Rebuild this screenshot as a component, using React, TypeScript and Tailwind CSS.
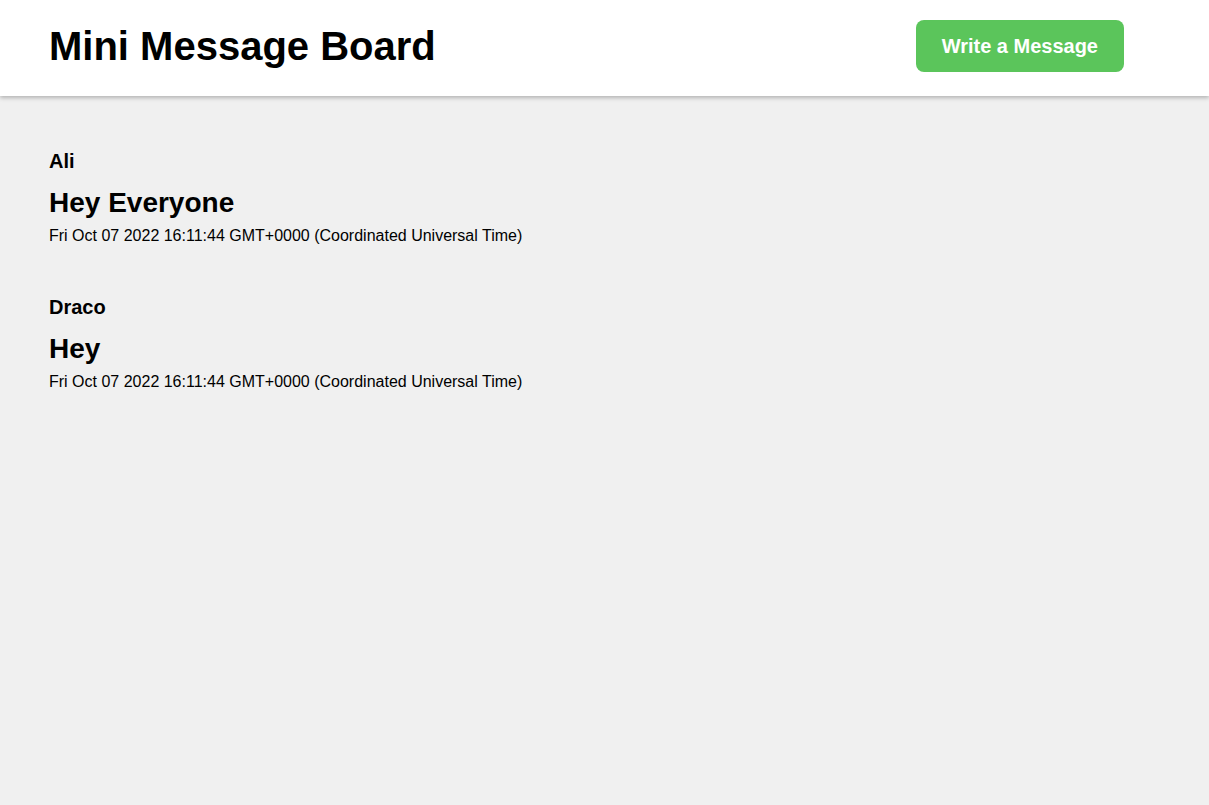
import React from "react";

const messages = [
  { user: "Ali", text: "Hey Everyone", added: "Fri Oct 07 2022 16:11:44 GMT+0000 (Coordinated Universal Time)" },
  { user: "Draco", text: "Hey", added: "Fri Oct 07 2022 16:11:44 GMT+0000 (Coordinated Universal Time)" },
];

export default function App() {
  return (
    <div className="min-h-[805px] bg-[#f0f0f0] text-black [font-family:'Liberation_Sans',Arial,sans-serif]">
      <header className="relative z-10 flex h-[96px] items-center justify-between bg-white pb-[4px] pl-[49px] pr-[85px] shadow-[0_2px_4px_rgba(0,0,0,0.25)]">
        <h1 className="text-[40px] font-bold leading-[46px]">Mini Message Board</h1>
        <button className="flex h-[52px] items-center rounded-lg bg-[#5bc55b] px-[26px] text-[20px] font-bold leading-[23px] text-white">
          Write a Message
        </button>
      </header>
      <main className="flex flex-col gap-[51px] px-[49px] pt-[54px]">
        {messages.map((m, i) => (
          <div key={i} className="flex flex-col">
            <div className="text-[20px] font-bold leading-[23px]">{m.user}</div>
            <div className="mt-[14px] text-[28px] font-bold leading-[32px]">{m.text}</div>
            <div className="mt-[8px] text-[16px] leading-[18px]">{m.added}</div>
          </div>
        ))}
      </main>
    </div>
  );
}
